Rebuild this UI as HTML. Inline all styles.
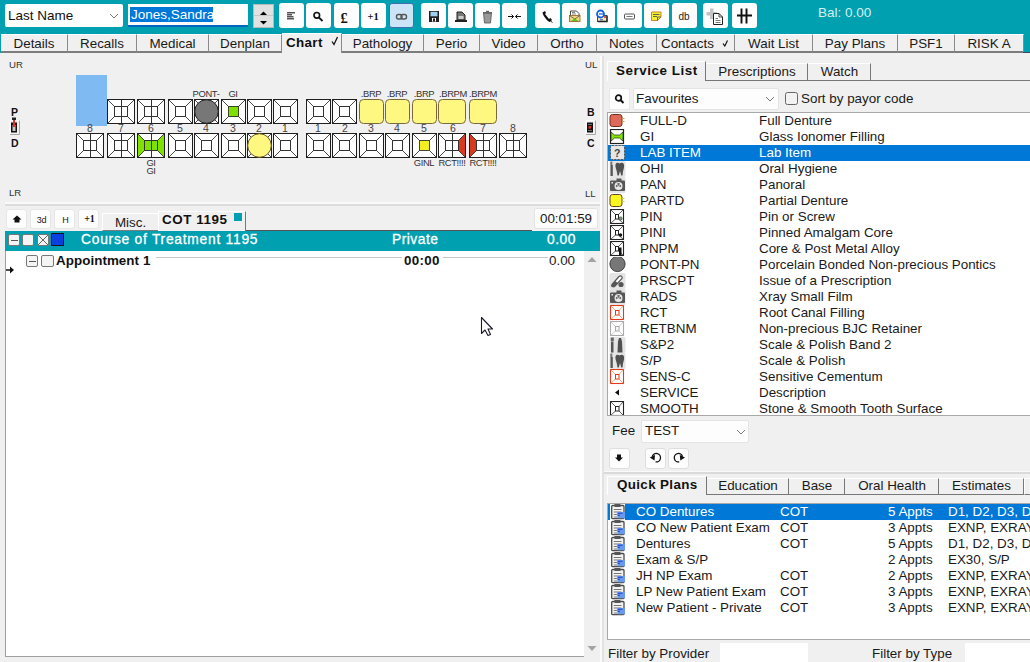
<!DOCTYPE html>
<html><head><meta charset="utf-8">
<style>
*{box-sizing:border-box;margin:0;padding:0}
html,body{width:1030px;height:662px;overflow:hidden;background:#f0f0f0;font-family:"Liberation Sans",sans-serif;font-size:13px;color:#000}
body{position:relative}
.a{position:absolute;white-space:nowrap}
.hdr{left:0;top:0;width:1030px;height:34px;background:#00a0b0}
.tb{position:absolute;top:3px;width:25px;height:25px;background:#fdfdfd;border-radius:3px}
.tb svg{position:absolute;left:0;top:0}
.tab{position:absolute;top:34px;height:19px;background:#f0f0f0;border-top:1px solid #fff;border-bottom:2px solid #7c7c7c;border-right:1px solid #8a8a8a;text-align:center;line-height:17px;font-size:13.4px;color:#1a1a1a;white-space:nowrap}
.lbl10{font-size:9.6px;color:#333;line-height:12px}
.lblb{font-size:10.5px;font-weight:bold;color:#111;line-height:11px}
.num{width:20px;text-align:center;font-size:10.5px;color:#444;line-height:11px}
.tl{width:60px;text-align:center;font-size:9.4px;color:#333;line-height:9px;letter-spacing:-0.35px}
.sb{position:absolute;top:209px;width:21px;height:20px;background:#fdfdfd;border-radius:3px;border:1px solid #e6e6e6}
.sb svg{position:absolute;left:-1px;top:-1px}
.cb{position:absolute;background:#f4f4f4;border:1px solid #777;border-radius:2px}
.li{font-size:13.4px;line-height:16px}
.rb{position:absolute;top:448px;width:21px;height:21px;background:#fdfdfd;border-radius:3px;border:1px solid #dedede}
.rb svg{position:absolute;left:-1px;top:-1px}
</style></head><body>
<div class="a hdr"></div>
<!-- Last Name combo -->
<div class="a" style="left:5px;top:4px;width:118px;height:23px;background:#fff;border-radius:2px"></div>
<div class="a" style="left:8px;top:8px;font-size:13.5px;color:#111;line-height:15px">Last Name</div>
<svg class="a" style="left:109px;top:13px" width="10" height="6"><path d="M1 1 L5 5 L9 1" fill="none" stroke="#777" stroke-width="1"/></svg>
<!-- text field -->
<div class="a" style="left:128px;top:4px;width:120px;height:23px;background:#fff;border-bottom:2px solid #0067c0"></div>
<div class="a" style="left:130px;top:7px;width:83px;height:15px;background:#0078d7"></div>
<div class="a" style="left:131px;top:7px;font-size:13.5px;color:#fff;line-height:15px">Jones,Sandra</div>
<!-- spinner -->
<div class="a" style="left:253px;top:4px;width:21px;height:24px;background:#e1e1e1;border:1px solid #b8b8b8"></div>
<div class="a" style="left:254px;top:15px;width:19px;height:1px;background:#c8c8c8"></div>
<svg class="a" style="left:253px;top:4px" width="21" height="24"><path d="M7 11 L10.5 7.5 L14 11 Z" fill="#000"/><path d="M7 17 L10.5 20.5 L14 17 Z" fill="#000"/></svg>
<!-- toolbar buttons -->
<div class="tb" style="left:279px"><svg width="25" height="25"><g fill="#555"><rect x="8" y="9" width="8" height="1.5"/><rect x="8" y="11" width="5" height="1.5"/><rect x="8" y="13" width="6.5" height="1.5"/><rect x="8" y="15" width="7" height="1.5"/></g></svg></div>
<div class="tb" style="left:306px"><svg width="25" height="25"><circle cx="10.8" cy="12.3" r="2.8" fill="none" stroke="#111" stroke-width="1.6"/><path d="M12.8 14.3 L16.5 18" stroke="#111" stroke-width="1.8"/></svg></div>
<div class="tb" style="left:334px"><svg width="25" height="25"><text x="6.5" y="19.5" font-family="Liberation Serif" font-weight="bold" font-size="14.5" fill="#111">£</text></svg></div>
<div class="tb" style="left:361px"><svg width="25" height="25"><text x="6.5" y="17" font-family="Liberation Serif" font-weight="bold" font-size="10.5" fill="#111">+1</text></svg></div>
<div class="tb" style="left:389px;background:#cce4f7;border:1px solid #3f6fb0"><svg width="25" height="25" style="left:-1px;top:-1px"><g fill="none" stroke="#555" stroke-width="1.4"><rect x="7.5" y="11.5" width="5.5" height="4.5" rx="2"/><rect x="12" y="11.5" width="5.5" height="4.5" rx="2"/></g></svg></div>
<div class="tb" style="left:421px"><svg width="25" height="25"><rect x="8" y="8" width="10" height="11" fill="#222"/><rect x="9.5" y="8.8" width="7" height="4.5" fill="#9fd0f0"/><rect x="11" y="15" width="4" height="3.5" fill="#fff"/><rect x="12" y="15.5" width="2" height="3" fill="#222"/></svg></div>
<div class="tb" style="left:448px"><svg width="25" height="25"><path d="M9 9 H14 L17 12 V17 H9 Z" fill="#777" stroke="#222" stroke-width="1"/><rect x="10.5" y="13" width="5" height="3" fill="#ccc"/><rect x="7" y="17" width="12" height="2" fill="#222"/></svg></div>
<div class="tb" style="left:475px"><svg width="25" height="25"><path d="M8.5 10 H16.5 L15.5 20 H9.5 Z" fill="#999" stroke="#555" stroke-width="0.8"/><rect x="8" y="9" width="9" height="1.6" fill="#666"/><rect x="11" y="7.8" width="3" height="1.4" fill="#666"/></svg></div>
<div class="tb" style="left:502px"><svg width="25" height="25"><g stroke="#111" stroke-width="1" fill="none"><path d="M6 13.5 H11.5 M9.5 11.5 L11.5 13.5 L9.5 15.5"/><path d="M19 13.5 H13.5 M15.5 11.5 L13.5 13.5 L15.5 15.5"/></g></svg></div>
<div class="tb" style="left:535px"><svg width="25" height="25"><path d="M7.5 9.5 L10 8 L11 10 L10 11 L14 16 L15.5 15 L17 17 L15 19 C13 19 8 13 7.5 9.5 Z" fill="#111"/><path d="M16 18 L17.5 20" stroke="#555" stroke-width="1"/></svg></div>
<div class="tb" style="left:562px"><svg width="25" height="25"><path d="M8.5 8 H14.5 L17 10.5 V14 H8.5 Z" fill="#fff" stroke="#333" stroke-width="0.9"/><path d="M10 9.5 H13 M10 11 H14" stroke="#666" stroke-width="0.8"/><rect x="7.5" y="12.5" width="10.5" height="6" fill="#f0d878" stroke="#9a7030" stroke-width="0.9"/><path d="M7.5 12.5 L12.75 16 L18 12.5" fill="none" stroke="#555" stroke-width="0.8"/><path d="M9 18 L12.75 15.5 L16.5 18 Z" fill="#58c020"/></svg></div>
<div class="tb" style="left:590px"><svg width="25" height="25"><rect x="7.5" y="12.5" width="9.5" height="6" fill="#f4e8b8" stroke="#333" stroke-width="0.9"/><path d="M17 13 V18.5 H8" fill="none" stroke="#222" stroke-width="1.3"/><circle cx="15" cy="14" r="1" fill="#e02020"/><rect x="10" y="16" width="3" height="1.5" fill="#6080c0"/><circle cx="10.5" cy="11" r="3.5" fill="#fff" stroke="#1060e0" stroke-width="1.8"/><path d="M9 11 H13" stroke="#1060e0" stroke-width="1.2"/></svg></div>
<div class="tb" style="left:617px"><svg width="25" height="25"><rect x="7.5" y="11" width="10" height="5" rx="1" fill="#fff" stroke="#555" stroke-width="1"/><path d="M9.5 13.5 H15.5" stroke="#777" stroke-width="1"/></svg></div>
<div class="tb" style="left:644px"><svg width="25" height="25"><path d="M7.5 9 H17 V14 L13.5 17.5 H7.5 Z" fill="#f4f030" stroke="#c77a20" stroke-width="0.9"/><path d="M9 11.5 H15.5 M9 13.5 H13 M13.5 17.5 V14 H17" fill="none" stroke="#445" stroke-width="0.8"/></svg></div>
<div class="tb" style="left:672px"><svg width="25" height="25"><text x="6.5" y="17" font-family="Liberation Sans" font-size="10" fill="#222">db</text></svg></div>
<div class="tb" style="left:703px"><svg width="25" height="25"><path d="M3.5 9 H7 V5.5 H10.5 V9 H14 V12.5 H10.5 V16 H7 V12.5 H3.5 Z" fill="#c4c4c4"/><path d="M10.5 10.5 H16 L19.5 14 V21.5 H10.5 Z" fill="#fff" stroke="#222" stroke-width="1"/><path d="M16 10.5 V14 H19.5" fill="none" stroke="#222" stroke-width="0.8"/><path d="M12.5 15.5 H15 M12.5 17.5 H17.5 M12.5 19.5 H17.5" stroke="#666" stroke-width="0.9"/></svg></div>
<div class="tb" style="left:732px"><svg width="25" height="25"><path d="M9.5 5.5 V20.5 M14.5 5.5 V20.5 M5 12.5 H20" stroke="#111" stroke-width="1.9"/></svg></div>
<div class="a" style="left:818px;top:5px;font-size:13.5px;color:#d6eef2;line-height:15px">Bal: 0.00</div>
<!-- tabs -->
<div class="a" style="left:0;top:34px;width:1px;height:19px;background:#00a0b0"></div>
<div class="tab" style="left:1px;width:67px">Details</div>
<div class="tab" style="left:68px;width:69px">Recalls</div>
<div class="tab" style="left:137px;width:72px">Medical</div>
<div class="tab" style="left:209px;width:73px">Denplan</div>
<div class="tab" style="left:282px;top:33px;width:60px;height:20px;border-bottom:none;background:#f0f0f0"></div>
<div class="a" style="left:286px;top:36px;font-size:13.4px;font-weight:bold;letter-spacing:0.35px;line-height:14px;color:#111">Chart</div>
<svg class="a" style="left:330px;top:36px" width="9" height="10"><path d="M2 5.5 L4 8.5 L7.5 1" fill="none" stroke="#111" stroke-width="1.3"/></svg>
<div class="tab" style="left:342px;width:82px">Pathology</div>
<div class="tab" style="left:424px;width:56px">Perio</div>
<div class="tab" style="left:480px;width:58px">Video</div>
<div class="tab" style="left:538px;width:59px">Ortho</div>
<div class="tab" style="left:597px;width:60px">Notes</div>
<div class="tab" style="left:657px;width:78px;text-align:left;padding-left:4px">Contacts</div>
<svg class="a" style="left:722px;top:40px" width="7" height="7"><path d="M1 3.5 L2.8 6 L5.5 0.5" fill="none" stroke="#111" stroke-width="1.2"/></svg>
<div class="tab" style="left:735px;width:78px">Wait List</div>
<div class="tab" style="left:813px;width:85px">Pay Plans</div>
<div class="tab" style="left:898px;width:57px">PSF1</div>
<div class="tab" style="left:955px;width:69px">RISK A</div>
<div class="a" style="left:1024px;top:34px;width:6px;height:18px;background:#00a0b0"></div>
<div class="a" style="left:1023px;top:52px;width:7px;height:1px;background:#3a4a60"></div>
<div class="a lbl10" style="left:9px;top:59px">UR</div>
<div class="a lbl10" style="left:585px;top:59px">UL</div>
<div class="a lbl10" style="left:9px;top:187px">LR</div>
<div class="a lbl10" style="left:585px;top:188px">LL</div>
<div class="a lblb" style="left:11px;top:107px">P</div>
<div class="a lblb" style="left:11px;top:138px">D</div>
<svg class="a" style="left:9px;top:116px" width="12" height="20"><path d="M1 19 V4.5 H10.5" fill="none" stroke="#fff" stroke-width="1"/><path d="M10.5 4.5 V18.5 H1" fill="none" stroke="#a8a8a8" stroke-width="1"/><rect x="2" y="6.5" width="6" height="10" fill="#111"/><rect x="3.5" y="9" width="3" height="6" fill="#c8c8c8"/><rect x="4" y="2" width="2" height="9" fill="#e03020"/><rect x="3" y="1.5" width="4" height="2.5" fill="#222"/></svg>
<div class="a lblb" style="left:587px;top:107px">B</div>
<div class="a lblb" style="left:587px;top:138px">C</div>
<svg class="a" style="left:585px;top:116px" width="12" height="20"><path d="M1 19 V4.5 H10.5" fill="none" stroke="#fff" stroke-width="1"/><path d="M10.5 4.5 V18.5 H1" fill="none" stroke="#a8a8a8" stroke-width="1"/><rect x="2" y="6.5" width="6" height="10" fill="#111"/><path d="M3 8.5 H7 M3 14.5 H7" stroke="#888" stroke-width="0.8"/><path d="M3.5 10 L6.5 10 L5.5 13 L3.5 12.5 Z" fill="#e82a1a"/></svg>
<div class="a" style="left:76px;top:75px;width:31px;height:51px;background:#7fbaf3"></div>
<svg class="a" style="left:107px;top:99px" width="28" height="25"><rect x="0" y="0" width="28" height="25" fill="#fff"/><g stroke="#333" stroke-width="1" fill="none"><path d="M0 0 L7.5 7.5 M28 0 L20.5 7.5 M0 25 L7.5 17.5 M28 25 L20.5 17.5" stroke-width="0.9"/><rect x="7.5" y="7.5" width="13" height="10"/><path d="M14.5 0.5 V24.5"/></g><rect x="0.5" y="0.5" width="27" height="24" fill="none" stroke="#1e1e1e" stroke-width="1"/></svg>
<svg class="a" style="left:137px;top:99px" width="28" height="25"><rect x="0" y="0" width="28" height="25" fill="#fff"/><g stroke="#333" stroke-width="1" fill="none"><path d="M0 0 L7.5 7.5 M28 0 L20.5 7.5 M0 25 L7.5 17.5 M28 25 L20.5 17.5" stroke-width="0.9"/><rect x="7.5" y="7.5" width="13" height="10"/><path d="M14.5 0.5 V24.5"/></g><rect x="0.5" y="0.5" width="27" height="24" fill="none" stroke="#1e1e1e" stroke-width="1"/></svg>
<svg class="a" style="left:168px;top:99px" width="25" height="25"><rect x="0" y="0" width="25" height="25" fill="#fff"/><g stroke="#333" stroke-width="1" fill="none"><path d="M0 0 L7.5 7.5 M25 0 L17.5 7.5 M0 25 L7.5 17.5 M25 25 L17.5 17.5" stroke-width="0.9"/><rect x="7.5" y="7.5" width="10" height="10"/></g><rect x="0.5" y="0.5" width="24" height="24" fill="none" stroke="#1e1e1e" stroke-width="1"/></svg>
<svg class="a" style="left:194px;top:99px" width="25" height="25"><rect x="0" y="0" width="25" height="25" fill="#fff"/><g stroke="#333" stroke-width="1" fill="none"><path d="M0 0 L7.5 7.5 M25 0 L17.5 7.5 M0 25 L7.5 17.5 M25 25 L17.5 17.5" stroke-width="0.9"/><rect x="7.5" y="7.5" width="10" height="10"/></g><rect x="0.5" y="0.5" width="24" height="24" fill="none" stroke="#1e1e1e" stroke-width="1"/></svg>
<svg class="a" style="left:194px;top:99px" width="25" height="25"><circle cx="12.5" cy="12.5" r="11.8" fill="#777" stroke="#222" stroke-width="1"/></svg>
<svg class="a" style="left:221px;top:99px" width="25" height="25"><rect x="0" y="0" width="25" height="25" fill="#fff"/><g stroke="#333" stroke-width="1" fill="none"><path d="M0 0 L7.5 7.5 M25 0 L17.5 7.5 M0 25 L7.5 17.5 M25 25 L17.5 17.5" stroke-width="0.9"/><rect x="7.5" y="7.5" width="10" height="10"/></g><rect x="0.5" y="0.5" width="24" height="24" fill="none" stroke="#1e1e1e" stroke-width="1"/></svg>
<svg class="a" style="left:221px;top:99px" width="25" height="25"><rect x="7.5" y="7.5" width="10" height="10" fill="#7fe000" stroke="#333" stroke-width="0.8"/></svg>
<svg class="a" style="left:247px;top:99px" width="25" height="25"><rect x="0" y="0" width="25" height="25" fill="#fff"/><g stroke="#333" stroke-width="1" fill="none"><path d="M0 0 L7.5 7.5 M25 0 L17.5 7.5 M0 25 L7.5 17.5 M25 25 L17.5 17.5" stroke-width="0.9"/><rect x="7.5" y="7.5" width="10" height="10"/></g><rect x="0.5" y="0.5" width="24" height="24" fill="none" stroke="#1e1e1e" stroke-width="1"/></svg>
<svg class="a" style="left:273px;top:99px" width="25" height="25"><rect x="0" y="0" width="25" height="25" fill="#fff"/><g stroke="#333" stroke-width="1" fill="none"><path d="M0 0 L7.5 7.5 M25 0 L17.5 7.5 M0 25 L7.5 17.5 M25 25 L17.5 17.5" stroke-width="0.9"/><rect x="7.5" y="7.5" width="10" height="10"/></g><rect x="0.5" y="0.5" width="24" height="24" fill="none" stroke="#1e1e1e" stroke-width="1"/></svg>
<svg class="a" style="left:76px;top:133px" width="28" height="25"><rect x="0" y="0" width="28" height="25" fill="#fff"/><g stroke="#333" stroke-width="1" fill="none"><path d="M0 0 L7.5 7.5 M28 0 L20.5 7.5 M0 25 L7.5 17.5 M28 25 L20.5 17.5" stroke-width="0.9"/><rect x="7.5" y="7.5" width="13" height="10"/><path d="M14.5 0.5 V24.5"/></g><rect x="0.5" y="0.5" width="27" height="24" fill="none" stroke="#1e1e1e" stroke-width="1"/></svg>
<svg class="a" style="left:107px;top:133px" width="28" height="25"><rect x="0" y="0" width="28" height="25" fill="#fff"/><g stroke="#333" stroke-width="1" fill="none"><path d="M0 0 L7.5 7.5 M28 0 L20.5 7.5 M0 25 L7.5 17.5 M28 25 L20.5 17.5" stroke-width="0.9"/><rect x="7.5" y="7.5" width="13" height="10"/><path d="M14.5 0.5 V24.5"/></g><rect x="0.5" y="0.5" width="27" height="24" fill="none" stroke="#1e1e1e" stroke-width="1"/></svg>
<svg class="a" style="left:137px;top:133px" width="28" height="25"><rect x="0" y="0" width="28" height="25" fill="#fff"/><path d="M0.5 0.5 L7.5 7.5 V17.5 L0.5 24.5 Z M27.5 0.5 L20.5 7.5 V17.5 L27.5 24.5 Z" fill="#80e000"/><rect x="7.5" y="7.5" width="13" height="10" fill="#80e000"/><g stroke="#333" stroke-width="1" fill="none"><path d="M0 0 L7.5 7.5 M28 0 L20.5 7.5 M0 25 L7.5 17.5 M28 25 L20.5 17.5" stroke-width="0.9"/><rect x="7.5" y="7.5" width="13" height="10"/><path d="M14.5 0.5 V24.5"/></g><rect x="0.5" y="0.5" width="27" height="24" fill="none" stroke="#1e1e1e" stroke-width="1"/></svg>
<svg class="a" style="left:168px;top:133px" width="25" height="25"><rect x="0" y="0" width="25" height="25" fill="#fff"/><g stroke="#333" stroke-width="1" fill="none"><path d="M0 0 L7.5 7.5 M25 0 L17.5 7.5 M0 25 L7.5 17.5 M25 25 L17.5 17.5" stroke-width="0.9"/><rect x="7.5" y="7.5" width="10" height="10"/></g><rect x="0.5" y="0.5" width="24" height="24" fill="none" stroke="#1e1e1e" stroke-width="1"/></svg>
<svg class="a" style="left:194px;top:133px" width="25" height="25"><rect x="0" y="0" width="25" height="25" fill="#fff"/><g stroke="#333" stroke-width="1" fill="none"><path d="M0 0 L7.5 7.5 M25 0 L17.5 7.5 M0 25 L7.5 17.5 M25 25 L17.5 17.5" stroke-width="0.9"/><rect x="7.5" y="7.5" width="10" height="10"/></g><rect x="0.5" y="0.5" width="24" height="24" fill="none" stroke="#1e1e1e" stroke-width="1"/></svg>
<svg class="a" style="left:221px;top:133px" width="25" height="25"><rect x="0" y="0" width="25" height="25" fill="#fff"/><g stroke="#333" stroke-width="1" fill="none"><path d="M0 0 L7.5 7.5 M25 0 L17.5 7.5 M0 25 L7.5 17.5 M25 25 L17.5 17.5" stroke-width="0.9"/><rect x="7.5" y="7.5" width="10" height="10"/></g><rect x="0.5" y="0.5" width="24" height="24" fill="none" stroke="#1e1e1e" stroke-width="1"/></svg>
<svg class="a" style="left:247px;top:133px" width="25" height="25"><rect x="0" y="0" width="25" height="25" fill="#fff"/><g stroke="#333" stroke-width="1" fill="none"><path d="M0 0 L7.5 7.5 M25 0 L17.5 7.5 M0 25 L7.5 17.5 M25 25 L17.5 17.5" stroke-width="0.9"/><rect x="7.5" y="7.5" width="10" height="10"/></g><rect x="0.5" y="0.5" width="24" height="24" fill="none" stroke="#1e1e1e" stroke-width="1"/></svg>
<svg class="a" style="left:247px;top:133px" width="25" height="25"><circle cx="12.5" cy="12.5" r="11.8" fill="#fff880" stroke="#6a5a20" stroke-width="1"/></svg>
<svg class="a" style="left:273px;top:133px" width="25" height="25"><rect x="0" y="0" width="25" height="25" fill="#fff"/><g stroke="#333" stroke-width="1" fill="none"><path d="M0 0 L7.5 7.5 M25 0 L17.5 7.5 M0 25 L7.5 17.5 M25 25 L17.5 17.5" stroke-width="0.9"/><rect x="7.5" y="7.5" width="10" height="10"/></g><rect x="0.5" y="0.5" width="24" height="24" fill="none" stroke="#1e1e1e" stroke-width="1"/></svg>
<svg class="a" style="left:306px;top:99px" width="25" height="25"><rect x="0" y="0" width="25" height="25" fill="#fff"/><g stroke="#333" stroke-width="1" fill="none"><path d="M0 0 L7.5 7.5 M25 0 L17.5 7.5 M0 25 L7.5 17.5 M25 25 L17.5 17.5" stroke-width="0.9"/><rect x="7.5" y="7.5" width="10" height="10"/></g><rect x="0.5" y="0.5" width="24" height="24" fill="none" stroke="#1e1e1e" stroke-width="1"/></svg>
<svg class="a" style="left:332px;top:99px" width="25" height="25"><rect x="0" y="0" width="25" height="25" fill="#fff"/><g stroke="#333" stroke-width="1" fill="none"><path d="M0 0 L7.5 7.5 M25 0 L17.5 7.5 M0 25 L7.5 17.5 M25 25 L17.5 17.5" stroke-width="0.9"/><rect x="7.5" y="7.5" width="10" height="10"/></g><rect x="0.5" y="0.5" width="24" height="24" fill="none" stroke="#1e1e1e" stroke-width="1"/></svg>
<svg class="a" style="left:359px;top:99px" width="25" height="25"><rect x="0.5" y="0.5" width="24" height="24" rx="4" fill="#fff880" stroke="#7a6a3a" stroke-width="1"/></svg>
<svg class="a" style="left:385px;top:99px" width="25" height="25"><rect x="0.5" y="0.5" width="24" height="24" rx="4" fill="#fff880" stroke="#7a6a3a" stroke-width="1"/></svg>
<svg class="a" style="left:412px;top:99px" width="25" height="25"><rect x="0.5" y="0.5" width="24" height="24" rx="4" fill="#fff880" stroke="#7a6a3a" stroke-width="1"/></svg>
<svg class="a" style="left:438px;top:99px" width="28" height="25"><rect x="0.5" y="0.5" width="27" height="24" rx="4" fill="#fff880" stroke="#7a6a3a" stroke-width="1"/></svg>
<svg class="a" style="left:469px;top:99px" width="28" height="25"><rect x="0.5" y="0.5" width="27" height="24" rx="4" fill="#fff880" stroke="#7a6a3a" stroke-width="1"/></svg>
<svg class="a" style="left:306px;top:133px" width="25" height="25"><rect x="0" y="0" width="25" height="25" fill="#fff"/><g stroke="#333" stroke-width="1" fill="none"><path d="M0 0 L7.5 7.5 M25 0 L17.5 7.5 M0 25 L7.5 17.5 M25 25 L17.5 17.5" stroke-width="0.9"/><rect x="7.5" y="7.5" width="10" height="10"/></g><rect x="0.5" y="0.5" width="24" height="24" fill="none" stroke="#1e1e1e" stroke-width="1"/></svg>
<svg class="a" style="left:332px;top:133px" width="25" height="25"><rect x="0" y="0" width="25" height="25" fill="#fff"/><g stroke="#333" stroke-width="1" fill="none"><path d="M0 0 L7.5 7.5 M25 0 L17.5 7.5 M0 25 L7.5 17.5 M25 25 L17.5 17.5" stroke-width="0.9"/><rect x="7.5" y="7.5" width="10" height="10"/></g><rect x="0.5" y="0.5" width="24" height="24" fill="none" stroke="#1e1e1e" stroke-width="1"/></svg>
<svg class="a" style="left:359px;top:133px" width="25" height="25"><rect x="0" y="0" width="25" height="25" fill="#fff"/><g stroke="#333" stroke-width="1" fill="none"><path d="M0 0 L7.5 7.5 M25 0 L17.5 7.5 M0 25 L7.5 17.5 M25 25 L17.5 17.5" stroke-width="0.9"/><rect x="7.5" y="7.5" width="10" height="10"/></g><rect x="0.5" y="0.5" width="24" height="24" fill="none" stroke="#1e1e1e" stroke-width="1"/></svg>
<svg class="a" style="left:385px;top:133px" width="25" height="25"><rect x="0" y="0" width="25" height="25" fill="#fff"/><g stroke="#333" stroke-width="1" fill="none"><path d="M0 0 L7.5 7.5 M25 0 L17.5 7.5 M0 25 L7.5 17.5 M25 25 L17.5 17.5" stroke-width="0.9"/><rect x="7.5" y="7.5" width="10" height="10"/></g><rect x="0.5" y="0.5" width="24" height="24" fill="none" stroke="#1e1e1e" stroke-width="1"/></svg>
<svg class="a" style="left:412px;top:133px" width="25" height="25"><rect x="0" y="0" width="25" height="25" fill="#fff"/><g stroke="#333" stroke-width="1" fill="none"><path d="M0 0 L7.5 7.5 M25 0 L17.5 7.5 M0 25 L7.5 17.5 M25 25 L17.5 17.5" stroke-width="0.9"/><rect x="7.5" y="7.5" width="10" height="10"/></g><rect x="0.5" y="0.5" width="24" height="24" fill="none" stroke="#1e1e1e" stroke-width="1"/></svg>
<svg class="a" style="left:412px;top:133px" width="25" height="25"><rect x="7.5" y="7.5" width="10" height="10" fill="#f4f020" stroke="#333" stroke-width="0.8"/></svg>
<svg class="a" style="left:438px;top:133px" width="28" height="25"><rect x="0" y="0" width="28" height="25" fill="#fff"/><path d="M27.5 0.5 L20.5 7.5 V17.5 L27.5 24.5 Z" fill="#d83a20"/><g stroke="#333" stroke-width="1" fill="none"><path d="M0 0 L7.5 7.5 M28 0 L20.5 7.5 M0 25 L7.5 17.5 M28 25 L20.5 17.5" stroke-width="0.9"/><rect x="7.5" y="7.5" width="13" height="10"/><path d="M14.5 0.5 V24.5"/></g><rect x="0.5" y="0.5" width="27" height="24" fill="none" stroke="#1e1e1e" stroke-width="1"/></svg>
<svg class="a" style="left:469px;top:133px" width="28" height="25"><rect x="0" y="0" width="28" height="25" fill="#fff"/><path d="M0.5 0.5 L7.5 7.5 V17.5 L0.5 24.5 Z" fill="#d83a20"/><g stroke="#333" stroke-width="1" fill="none"><path d="M0 0 L7.5 7.5 M28 0 L20.5 7.5 M0 25 L7.5 17.5 M28 25 L20.5 17.5" stroke-width="0.9"/><rect x="7.5" y="7.5" width="13" height="10"/><path d="M14.5 0.5 V24.5"/></g><rect x="0.5" y="0.5" width="27" height="24" fill="none" stroke="#1e1e1e" stroke-width="1"/></svg>
<svg class="a" style="left:499px;top:133px" width="28" height="25"><rect x="0" y="0" width="28" height="25" fill="#fff"/><g stroke="#333" stroke-width="1" fill="none"><path d="M0 0 L7.5 7.5 M28 0 L20.5 7.5 M0 25 L7.5 17.5 M28 25 L20.5 17.5" stroke-width="0.9"/><rect x="7.5" y="7.5" width="13" height="10"/><path d="M14.5 0.5 V24.5"/></g><rect x="0.5" y="0.5" width="27" height="24" fill="none" stroke="#1e1e1e" stroke-width="1"/></svg>
<div class="a num" style="left:80px;top:123px">8</div>
<div class="a num" style="left:111px;top:123px">7</div>
<div class="a num" style="left:141px;top:123px">6</div>
<div class="a num" style="left:170px;top:123px">5</div>
<div class="a num" style="left:196px;top:123px">4</div>
<div class="a num" style="left:223px;top:123px">3</div>
<div class="a num" style="left:249px;top:123px">2</div>
<div class="a num" style="left:275px;top:123px">1</div>
<div class="a num" style="left:308px;top:123px">1</div>
<div class="a num" style="left:335px;top:123px">2</div>
<div class="a num" style="left:361px;top:123px">3</div>
<div class="a num" style="left:387px;top:123px">4</div>
<div class="a num" style="left:414px;top:123px">5</div>
<div class="a num" style="left:443px;top:123px">6</div>
<div class="a num" style="left:473px;top:123px">7</div>
<div class="a num" style="left:503px;top:123px">8</div>
<div class="a tl" style="left:176px;top:89px">PONT-</div>
<div class="a tl" style="left:203px;top:89px">GI</div>
<div class="a tl" style="left:341px;top:89px">.BRP</div>
<div class="a tl" style="left:367px;top:89px">.BRP</div>
<div class="a tl" style="left:394px;top:89px">.BRP</div>
<div class="a tl" style="left:423px;top:89px">.BRPM</div>
<div class="a tl" style="left:453px;top:89px">.BRPM</div>
<div class="a tl" style="left:121px;top:158px">GI</div>
<div class="a tl" style="left:121px;top:166px">GI</div>
<div class="a tl" style="left:394px;top:158px">GINL</div>
<div class="a tl" style="left:422px;top:158px">RCT!!!!</div>
<div class="a tl" style="left:453px;top:158px">RCT!!!!</div>
<div class="a" style="left:5px;top:202px;width:595px;height:2px;background:#fafafa"></div>
<div class="a" style="left:5px;top:204px;width:595px;height:2px;background:#dcdcdc"></div><!-- chart toolbar -->
<div class="sb" style="left:6px"><svg width="21" height="20"><path d="M11 6.5 L15.5 10.5 H13.5 V13.5 H8.5 V10.5 H6.5 Z" fill="#111"/></svg></div>
<div class="sb" style="left:30px"><div class="a" style="left:0;top:5px;width:21px;text-align:center;font-size:9px;color:#222;line-height:11px;letter-spacing:-0.2px">3d</div></div>
<div class="sb" style="left:54px"><div class="a" style="left:0;top:5px;width:21px;text-align:center;font-size:9px;color:#222;line-height:11px">H</div></div>
<div class="sb" style="left:78px"><div class="a" style="left:0;top:3px;width:21px;text-align:center;font-family:'Liberation Serif';font-weight:bold;font-size:10px;color:#111;line-height:12px">+1</div></div>
<!-- tabs Misc / COT -->
<div class="a" style="left:102px;top:213px;width:57px;height:18px;background:#f0f0f0;border-top:1px solid #fff;border-left:1px solid #fff;border-bottom:1px solid #7c7c7c"></div>
<div class="a" style="left:102px;top:216px;width:57px;text-align:center;font-size:13.4px;color:#1a1a1a;line-height:14px">Misc.</div>
<div class="a" style="left:158px;top:211px;width:88px;height:20px;background:#f0f0f0;border-top:1px solid #fff;border-left:1px solid #fff;border-right:1px solid #777"></div>
<div class="a" style="left:162px;top:213px;font-size:13.4px;font-weight:bold;color:#111;line-height:14px;letter-spacing:0.55px">COT 1195</div>
<div class="a" style="left:234px;top:213px;width:8px;height:8px;background:#00a0b0"></div>
<div class="a" style="left:246px;top:230px;width:286px;height:1px;background:#555"></div>
<!-- timer -->
<div class="a" style="left:534px;top:208px;width:64px;height:21px;background:#fcfcfc;border-radius:2px;border:1px solid #e4e4e4"></div>
<div class="a" style="left:534px;top:211px;width:64px;text-align:center;font-size:13.4px;color:#1a1a1a;line-height:15px">00:01:59</div>
<!-- tree panel -->
<div class="a" style="left:5px;top:231px;width:595px;height:426px;background:#fff;border-left:1px solid #a0a0a0;border-bottom:1px solid #a0a0a0"></div>
<div class="a" style="left:5px;top:231px;width:595px;height:20px;background:#00a0b0"></div>
<div class="cb" style="left:8px;top:234px;width:12px;height:12px"><div class="a" style="left:2px;top:5px;width:7px;height:1px;background:#555"></div></div>
<div class="cb" style="left:22px;top:234px;width:12px;height:12px"></div>
<div class="cb" style="left:37px;top:234px;width:12px;height:12px"><svg class="a" style="left:-1px;top:-1px" width="12" height="12"><path d="M1 1 L11 11 M11 1 L1 11" stroke="#555" stroke-width="0.9"/></svg></div>
<div class="a" style="left:51px;top:233px;width:13px;height:13px;background:#0a3fe0;border:1px solid #112"></div>
<div class="a" style="left:81px;top:232px;font-size:13.4px;color:#fff;line-height:16px;letter-spacing:0.75px;font-size:13.8px;-webkit-text-stroke:0.3px #fff">Course of Treatment 1195</div>
<div class="a" style="left:392px;top:232px;font-size:13.4px;color:#fff;line-height:16px;letter-spacing:0.5px;font-size:13.8px;-webkit-text-stroke:0.3px #fff">Private</div>
<div class="a" style="left:547px;top:232px;font-size:13.4px;color:#fff;line-height:16px;letter-spacing:0.5px;font-size:13.8px;-webkit-text-stroke:0.3px #fff">0.00</div>
<!-- appointment row -->
<div class="cb" style="left:26px;top:255px;width:12px;height:12px"><div class="a" style="left:2px;top:5px;width:7px;height:1px;background:#555"></div></div>
<div class="cb" style="left:41px;top:255px;width:13px;height:12px"></div>
<div class="a" style="left:56px;top:253px;font-size:13.4px;font-weight:bold;color:#111;line-height:16px;letter-spacing:0.05px">Appointment 1</div>
<div class="a" style="left:156px;top:257px;width:246px;height:1px;background:#c8c8c8"></div>
<div class="a" style="left:404px;top:253px;font-size:13.4px;font-weight:bold;color:#111;line-height:16px;letter-spacing:0.3px">00:00</div>
<div class="a" style="left:443px;top:257px;width:105px;height:1px;background:#c8c8c8"></div>
<div class="a" style="left:549px;top:253px;font-size:13.4px;color:#222;line-height:16px">0.00</div>
<svg class="a" style="left:6px;top:266px" width="9" height="8"><path d="M0 3.2 H4 V0.5 L8 4 L4 7.5 V4.8 H0 Z" fill="#111"/></svg>
<!-- scrollbar -->
<div class="a" style="left:584px;top:251px;width:16px;height:406px;background:#f0f0f0"></div>
<svg class="a" style="left:584px;top:253px" width="16" height="12"><path d="M3.5 9 L8 4 L12.5 9 Z" fill="#a3a3a3"/></svg>
<svg class="a" style="left:584px;top:643px" width="16" height="12"><path d="M3.5 3 L8 8 L12.5 3 Z" fill="#a3a3a3"/></svg>
<!-- mouse cursor -->
<svg class="a" style="left:480px;top:316px" width="15" height="22"><path d="M1.5 1.5 V17.5 L5 14 L8 19.5 L10.5 18.5 L8 13 L12.5 13 Z" fill="#fff" stroke="#1a1a2a" stroke-width="1.1" stroke-linejoin="round"/></svg>
<div class="a" style="left:600px;top:56px;width:2px;height:606px;background:#fbfbfb"></div>
<div class="a" style="left:602px;top:56px;width:2px;height:606px;background:#e2e2e2"></div>
<div class="a" style="left:608px;top:80px;width:422px;height:1px;background:#7a7a7a"></div>
<div class="a" style="left:607px;top:61px;width:99px;height:20px;background:#f0f0f0;border-top:1px solid #fff;border-left:1px solid #fff;border-right:1px solid #777"></div>
<div class="a" style="left:616px;top:64px;font-size:13.4px;font-weight:bold;color:#111;line-height:14px;letter-spacing:0.55px">Service List</div>
<div class="a" style="left:706px;top:63px;width:102px;height:18px;background:#f0f0f0;border-top:1px solid #fff;border-right:1px solid #777;border-bottom:1px solid #777"></div>
<div class="a" style="left:706px;top:65px;width:102px;text-align:center;font-size:13.4px;color:#1a1a1a;line-height:14px">Prescriptions</div>
<div class="a" style="left:808px;top:63px;width:63px;height:18px;background:#f0f0f0;border-top:1px solid #fff;border-right:1px solid #777;border-bottom:1px solid #777"></div>
<div class="a" style="left:808px;top:65px;width:63px;text-align:center;font-size:13.4px;color:#1a1a1a;line-height:14px">Watch</div>
<div class="a" style="left:609px;top:88px;width:21px;height:22px;background:#fdfdfd;border-radius:2px;border:1px solid #e8e8e8"><svg class="a" style="left:-1px;top:-1px" width="21" height="22"><circle cx="9.5" cy="10" r="2.8" fill="none" stroke="#111" stroke-width="1.7"/><path d="M11.5 12 L14.5 15" stroke="#111" stroke-width="1.9"/></svg></div>
<div class="a" style="left:633px;top:88px;width:146px;height:22px;background:#fdfdfd;border-radius:2px;border:1px solid #e4e4e4"></div>
<div class="a" style="left:636px;top:91px;font-size:13.4px;color:#1a1a1a;line-height:15px">Favourites</div>
<svg class="a" style="left:765px;top:96px" width="10" height="6"><path d="M1 1 L5 5 L9 1" fill="none" stroke="#777" stroke-width="1"/></svg>
<div class="a" style="left:785px;top:92px;width:13px;height:13px;background:#f2f2f2;border:1px solid #666;border-radius:2.5px"></div>
<div class="a" style="left:801px;top:91px;font-size:13.4px;color:#1a1a1a;line-height:15px">Sort by payor code</div>
<div class="a" style="left:607px;top:112px;width:430px;height:304px;background:#fff;border:1px solid #a8a8a8"></div>
<div class="a" style="left:608px;top:113px;width:422px;height:302px;overflow:hidden">
<svg class="a" style="left:0px;top:0px" width="18" height="16"><rect x="2" y="1.5" width="12" height="12" rx="2.5" fill="#e06a58" stroke="#6a3020" stroke-width="1"/><path d="M14 5.5 H16.5 M14 8.5 H16.5" stroke="#e0a040" stroke-width="1.2"/></svg>
<div class="a li" style="left:32px;top:0px;color:#1a1a1a">FULL-D</div>
<div class="a li" style="left:151px;top:0px;color:#1a1a1a">Full Denture</div>
<svg class="a" style="left:0px;top:16px" width="18" height="16"><rect x="2.5" y="0.5" width="13" height="14" fill="#fff" stroke="#222" stroke-width="1.2"/><path d="M3 3 L6.5 6 H11.5 L15 3 V12 L11.5 9 H6.5 L3 12 Z" fill="#80e800" stroke="#222" stroke-width="0.7"/></svg>
<div class="a li" style="left:32px;top:16px;color:#1a1a1a">GI</div>
<div class="a li" style="left:151px;top:16px;color:#1a1a1a">Glass Ionomer Filling</div>
<div class="a" style="left:0;top:32px;width:422px;height:16px;background:#0078d7"></div>
<svg class="a" style="left:0px;top:32px" width="18" height="16"><rect x="2.5" y="0.5" width="14" height="14" rx="1.5" fill="#e6e6e6" stroke="#555" stroke-width="1" stroke-dasharray="2 1.3"/><text x="6" y="11.5" font-family="Liberation Sans" font-weight="bold" font-size="10.5" fill="#444">?</text></svg>
<div class="a li" style="left:32px;top:32px;color:#fff">LAB ITEM</div>
<div class="a li" style="left:151px;top:32px;color:#fff">Lab Item</div>
<svg class="a" style="left:0px;top:48px" width="18" height="16"><rect x="1.5" y="0" width="16" height="16" rx="1.5" fill="#e4e4e4"/><rect x="2.5" y="4" width="2.3" height="11" fill="#555"/><rect x="2.3" y="0.5" width="2" height="3.5" fill="#777"/><path d="M7.5 3.5 C8 1.5 10 1 11.5 2.5 C13 1 15.5 1.5 16 3.5 C16.5 6 15.5 8 15 10.5 L14.5 14.5 H13.2 L12 10 L10.8 14.5 H9.5 L8.8 10.5 C8.3 8 7 6 7.5 3.5 Z" fill="#505050"/></svg>
<div class="a li" style="left:32px;top:48px;color:#1a1a1a">OHI</div>
<div class="a li" style="left:151px;top:48px;color:#1a1a1a">Oral Hygiene</div>
<svg class="a" style="left:0px;top:64px" width="18" height="16"><rect x="1.5" y="0" width="16" height="16" rx="1.5" fill="#e4e4e4"/><rect x="2" y="3.5" width="15" height="10.5" rx="1" fill="#575757"/><rect x="8.5" y="1.5" width="5" height="2.5" fill="#575757"/><circle cx="10.5" cy="9" r="4" fill="#e8e8e8"/><path d="M10.5 9 L9 6.5 A3 3 0 0 1 12 6.5 Z M10.5 9 L8 10.3 A3 3 0 0 1 8.2 7.8 Z M10.5 9 L13 10.3 A3 3 0 0 0 12.8 7.8 Z" fill="#666"/><rect x="3.5" y="5" width="1.5" height="1.5" fill="#eee"/></svg>
<div class="a li" style="left:32px;top:64px;color:#1a1a1a">PAN</div>
<div class="a li" style="left:151px;top:64px;color:#1a1a1a">Panoral</div>
<svg class="a" style="left:0px;top:80px" width="18" height="16"><rect x="2" y="1.5" width="12" height="12" rx="2.5" fill="#f8f820" stroke="#6a4020" stroke-width="1"/><path d="M14 5.5 H16.5 M14 8.5 H16.5" stroke="#e0d040" stroke-width="1.2"/></svg>
<div class="a li" style="left:32px;top:80px;color:#1a1a1a">PARTD</div>
<div class="a li" style="left:151px;top:80px;color:#1a1a1a">Partial Denture</div>
<svg class="a" style="left:0px;top:96px" width="18" height="16"><rect x="2.5" y="0.5" width="13" height="14" fill="#fff" stroke="#222" stroke-width="1.1"/><path d="M2.5 0.5 L7.5 5.5 M15.5 0.5 L10.5 5.5 M2.5 14.5 L7.5 10.0 M15.5 14.5 L10.5 10.0" stroke="#333" stroke-width="0.8"/><rect x="7.5" y="5.5" width="3" height="4.5" fill="#fff" stroke="#222" stroke-width="1"/><circle cx="12.5" cy="9.5" r="1.6" fill="#7a7" stroke="#333" stroke-width="0.7"/></svg>
<div class="a li" style="left:32px;top:96px;color:#1a1a1a">PIN</div>
<div class="a li" style="left:151px;top:96px;color:#1a1a1a">Pin or Screw</div>
<svg class="a" style="left:0px;top:112px" width="18" height="16"><rect x="2.5" y="0.5" width="13" height="14" fill="#fff" stroke="#222" stroke-width="1.1"/><path d="M2.5 0.5 L7.5 5.5 M15.5 0.5 L10.5 5.5 M2.5 14.5 L7.5 10.0 M15.5 14.5 L10.5 10.0" stroke="#333" stroke-width="0.8"/><rect x="7.5" y="5.5" width="3" height="4.5" fill="#fff" stroke="#222" stroke-width="1"/><circle cx="12.5" cy="10" r="1.7" fill="#111"/></svg>
<div class="a li" style="left:32px;top:112px;color:#1a1a1a">PINI</div>
<div class="a li" style="left:151px;top:112px;color:#1a1a1a">Pinned Amalgam Core</div>
<svg class="a" style="left:0px;top:128px" width="18" height="16"><rect x="2.5" y="0.5" width="13" height="14" fill="#fff" stroke="#222" stroke-width="1.1"/><path d="M2.5 0.5 L7.5 5.5 M15.5 0.5 L10.5 5.5 M2.5 14.5 L7.5 10.0 M15.5 14.5 L10.5 10.0" stroke="#333" stroke-width="0.8"/><rect x="7.5" y="5.5" width="3" height="4.5" fill="#fff" stroke="#222" stroke-width="1"/><rect x="11" y="6.5" width="2.5" height="8" fill="#111"/></svg>
<div class="a li" style="left:32px;top:128px;color:#1a1a1a">PNPM</div>
<div class="a li" style="left:151px;top:128px;color:#1a1a1a">Core &amp; Post Metal Alloy</div>
<svg class="a" style="left:0px;top:144px" width="18" height="16"><circle cx="9.5" cy="7" r="7.6" fill="#777" stroke="#333" stroke-width="0.9"/></svg>
<div class="a li" style="left:32px;top:144px;color:#1a1a1a">PONT-PN</div>
<div class="a li" style="left:151px;top:144px;color:#1a1a1a">Porcelain Bonded Non-precious Pontics</div>
<svg class="a" style="left:0px;top:160px" width="18" height="16"><rect x="1.5" y="0" width="16" height="16" rx="1.5" fill="#e4e4e4"/><path d="M4 11.5 L11 3.5 C12.5 2 15 3.5 14 5.5 L7 13 C5.5 14.5 2.5 13.5 4 11.5 Z" fill="#fff" stroke="#555" stroke-width="1.2"/><path d="M4 11.5 L7.5 8 L10 10.5 L7 13 C5.5 14.5 2.5 13.5 4 11.5 Z" fill="#555"/><circle cx="13" cy="11.5" r="2.6" fill="#555"/></svg>
<div class="a li" style="left:32px;top:160px;color:#1a1a1a">PRSCPT</div>
<div class="a li" style="left:151px;top:160px;color:#1a1a1a">Issue of a Prescription</div>
<svg class="a" style="left:0px;top:176px" width="18" height="16"><rect x="1.5" y="0" width="16" height="16" rx="1.5" fill="#e4e4e4"/><rect x="2" y="3.5" width="15" height="10.5" rx="1" fill="#575757"/><rect x="8.5" y="1.5" width="5" height="2.5" fill="#575757"/><circle cx="10.5" cy="9" r="4" fill="#e8e8e8"/><path d="M10.5 9 L9 6.5 A3 3 0 0 1 12 6.5 Z M10.5 9 L8 10.3 A3 3 0 0 1 8.2 7.8 Z M10.5 9 L13 10.3 A3 3 0 0 0 12.8 7.8 Z" fill="#666"/><rect x="3.5" y="5" width="1.5" height="1.5" fill="#eee"/></svg>
<div class="a li" style="left:32px;top:176px;color:#1a1a1a">RADS</div>
<div class="a li" style="left:151px;top:176px;color:#1a1a1a">Xray Small Film</div>
<svg class="a" style="left:0px;top:192px" width="18" height="16"><rect x="2.5" y="0.5" width="13" height="14" fill="#fff" stroke="#e03a20" stroke-width="1.1"/><path d="M2.5 0.5 L7.5 5.5 M15.5 0.5 L11.0 5.5 M2.5 14.5 L7.5 10.0 M15.5 14.5 L11.0 10.0" stroke="#e0a060" stroke-width="0.8"/><rect x="7.5" y="5.5" width="3.5" height="4.5" fill="#fff" stroke="#e03a20" stroke-width="1"/></svg>
<div class="a li" style="left:32px;top:192px;color:#1a1a1a">RCT</div>
<div class="a li" style="left:151px;top:192px;color:#1a1a1a">Root Canal Filling</div>
<svg class="a" style="left:0px;top:208px" width="18" height="16"><rect x="2.5" y="0.5" width="13" height="14" fill="#fff" stroke="#aaa" stroke-width="1.1"/><path d="M2.5 0.5 L7.5 5.5 M15.5 0.5 L11.0 5.5 M2.5 14.5 L7.5 10.0 M15.5 14.5 L11.0 10.0" stroke="#bbb" stroke-width="0.8"/><rect x="7.5" y="5.5" width="3.5" height="4.5" fill="#fff" stroke="#aaa" stroke-width="1"/></svg>
<div class="a li" style="left:32px;top:208px;color:#1a1a1a">RETBNM</div>
<div class="a li" style="left:151px;top:208px;color:#1a1a1a">Non-precious BJC Retainer</div>
<svg class="a" style="left:0px;top:224px" width="18" height="16"><rect x="1.5" y="0" width="16" height="16" rx="1.5" fill="#e4e4e4"/><rect x="3" y="4.5" width="2.5" height="11" fill="#555"/><rect x="2.8" y="0.5" width="3" height="3.5" fill="#666"/><path d="M10 4.5 L11 1 H13 L14 4.5 L14.5 15.5 H9.5 Z" fill="#505050"/></svg>
<div class="a li" style="left:32px;top:224px;color:#1a1a1a">S&amp;P2</div>
<div class="a li" style="left:151px;top:224px;color:#1a1a1a">Scale &amp; Polish Band 2</div>
<svg class="a" style="left:0px;top:240px" width="18" height="16"><rect x="1.5" y="0" width="16" height="16" rx="1.5" fill="#e4e4e4"/><rect x="2.5" y="4" width="2.3" height="11" fill="#555"/><rect x="2.3" y="0.5" width="2" height="3.5" fill="#777"/><path d="M7.5 3.5 C8 1.5 10 1 11.5 2.5 C13 1 15.5 1.5 16 3.5 C16.5 6 15.5 8 15 10.5 L14.5 14.5 H13.2 L12 10 L10.8 14.5 H9.5 L8.8 10.5 C8.3 8 7 6 7.5 3.5 Z" fill="#505050"/></svg>
<div class="a li" style="left:32px;top:240px;color:#1a1a1a">S/P</div>
<div class="a li" style="left:151px;top:240px;color:#1a1a1a">Scale &amp; Polish</div>
<svg class="a" style="left:0px;top:256px" width="18" height="16"><rect x="2.5" y="0.5" width="13" height="14" fill="#fff" stroke="#e03a20" stroke-width="1.1"/><path d="M2.5 0.5 L7.5 5.5 M15.5 0.5 L11.0 5.5 M2.5 14.5 L7.5 10.0 M15.5 14.5 L11.0 10.0" stroke="#e0a060" stroke-width="0.8"/><rect x="7.5" y="5.5" width="3.5" height="4.5" fill="#fff" stroke="#e03a20" stroke-width="1"/></svg>
<div class="a li" style="left:32px;top:256px;color:#1a1a1a">SENS-C</div>
<div class="a li" style="left:151px;top:256px;color:#1a1a1a">Sensitive Cementum</div>
<svg class="a" style="left:0px;top:272px" width="18" height="16"><path d="M7 7.5 L11 4.5 V10.5 Z" fill="#111"/></svg>
<div class="a li" style="left:32px;top:272px;color:#1a1a1a">SERVICE</div>
<div class="a li" style="left:151px;top:272px;color:#1a1a1a">Description</div>
<svg class="a" style="left:0px;top:288px" width="18" height="16"><rect x="2.5" y="0.5" width="13" height="14" fill="#fff" stroke="#222" stroke-width="1.1"/><path d="M2.5 0.5 L7.5 5.5 M15.5 0.5 L11.0 5.5 M2.5 14.5 L7.5 10.0 M15.5 14.5 L11.0 10.0" stroke="#333" stroke-width="0.8"/><rect x="7.5" y="5.5" width="3.5" height="4.5" fill="#fff" stroke="#222" stroke-width="1"/></svg>
<div class="a li" style="left:32px;top:288px;color:#1a1a1a">SMOOTH</div>
<div class="a li" style="left:151px;top:288px;color:#1a1a1a">Stone &amp; Smooth Tooth Surface</div>
</div>
<div class="a" style="left:612px;top:423px;font-size:13.4px;color:#1a1a1a;line-height:15px">Fee</div>
<div class="a" style="left:641px;top:420px;width:108px;height:23px;background:#fdfdfd;border-radius:2px;border:1px solid #e4e4e4"></div>
<div class="a" style="left:645px;top:423px;font-size:13.4px;color:#1a1a1a;line-height:15px">TEST</div>
<svg class="a" style="left:736px;top:429px" width="10" height="6"><path d="M1 1 L5 5 L9 1" fill="none" stroke="#777" stroke-width="1"/></svg>
<div class="a rb" style="left:609px"><svg width="20" height="20"><path d="M6 9.5 H8 V6.5 H12 V9.5 H14 L10 13.5 Z" fill="#111"/></svg></div>
<div class="a rb" style="left:645px"><svg width="20" height="20"><path d="M7.24 8.61 A4.2 4.2 0 1 1 10.57 13.84" fill="none" stroke="#111" stroke-width="1.3"/><path d="M4.8 9.6 L10 7 L9.5 12.4 Z" fill="#111"/></svg></div>
<div class="a rb" style="left:668px"><svg width="20" height="20"><path d="M14.56 8.61 A4.2 4.2 0 1 0 11.23 13.84" fill="none" stroke="#111" stroke-width="1.3"/><path d="M17 9.6 L11.8 7 L12.3 12.4 Z" fill="#111"/></svg></div>
<div class="a" style="left:604px;top:472px;width:426px;height:2px;background:#dadada"></div>
<div class="a" style="left:604px;top:471px;width:426px;height:1px;background:#fafafa"></div>
<div class="a" style="left:608px;top:494px;width:422px;height:1px;background:#7a7a7a"></div>
<div class="a" style="left:607px;top:476px;width:100px;height:19px;background:#f0f0f0;border-top:1px solid #fff;border-left:1px solid #fff;border-right:1px solid #777"></div>
<div class="a" style="left:617px;top:478px;font-size:13.4px;font-weight:bold;color:#111;line-height:14px;letter-spacing:0.35px">Quick Plans</div>
<div class="a" style="left:707px;top:478px;width:82px;height:17px;background:#f0f0f0;border-top:1px solid #fff;border-right:1px solid #777;border-bottom:1px solid #777"></div>
<div class="a" style="left:707px;top:479px;width:82px;text-align:center;font-size:13.4px;color:#1a1a1a;line-height:14px">Education</div>
<div class="a" style="left:789px;top:478px;width:56px;height:17px;background:#f0f0f0;border-top:1px solid #fff;border-right:1px solid #777;border-bottom:1px solid #777"></div>
<div class="a" style="left:789px;top:479px;width:56px;text-align:center;font-size:13.4px;color:#1a1a1a;line-height:14px">Base</div>
<div class="a" style="left:845px;top:478px;width:94px;height:17px;background:#f0f0f0;border-top:1px solid #fff;border-right:1px solid #777;border-bottom:1px solid #777"></div>
<div class="a" style="left:845px;top:479px;width:94px;text-align:center;font-size:13.4px;color:#1a1a1a;line-height:14px">Oral Health</div>
<div class="a" style="left:939px;top:478px;width:85px;height:17px;background:#f0f0f0;border-top:1px solid #fff;border-right:1px solid #777;border-bottom:1px solid #777"></div>
<div class="a" style="left:939px;top:479px;width:85px;text-align:center;font-size:13.4px;color:#1a1a1a;line-height:14px">Estimates</div>
<div class="a" style="left:1024px;top:478px;width:6px;height:17px;background:#f0f0f0;border-top:1px solid #fff;border-left:1px solid #fff;border-bottom:1px solid #777"></div>
<div class="a" style="left:607px;top:503px;width:430px;height:137px;background:#fff;border:1px solid #a8a8a8"></div>
<div class="a" style="left:608px;top:504px;width:422px;height:135px;overflow:hidden">
<div class="a" style="left:0;top:0px;width:422px;height:16px;background:#0078d7"></div>
<div class="a" style="left:2px;top:0px;width:15px;height:16px;background:#fff"></div>
<svg class="a" style="left:0px;top:0px" width="18" height="16"><rect x="3.7" y="1.5" width="12.3" height="13.2" rx="1" fill="#f2f2f2" stroke="#4a4a4a" stroke-width="1.3"/><rect x="6.5" y="0" width="6" height="3" rx="0.5" fill="#555"/><path d="M5.8 5.5 H13.5 M5.8 8 H13.5 M5.8 10.5 H9.5 M5.8 13 H9.5" stroke="#777" stroke-width="1"/><rect x="9.5" y="8" width="7.5" height="6.3" fill="#6a9ae8"/><path d="M9.5 9.3 H14.5 M9.5 11.3 H12" stroke="#1a40d0" stroke-width="1.1"/></svg>
<div class="a li" style="left:28px;top:0px;color:#fff">CO Dentures</div>
<div class="a li" style="left:172px;top:0px;color:#fff">COT</div>
<div class="a li" style="left:280px;top:0px;color:#fff">5 Appts</div>
<div class="a li" style="left:340px;top:0px;color:#fff">D1, D2, D3, D4</div>
<svg class="a" style="left:0px;top:16px" width="18" height="16"><rect x="3.7" y="1.5" width="12.3" height="13.2" rx="1" fill="#f2f2f2" stroke="#4a4a4a" stroke-width="1.3"/><rect x="6.5" y="0" width="6" height="3" rx="0.5" fill="#555"/><path d="M5.8 5.5 H13.5 M5.8 8 H13.5 M5.8 10.5 H9.5 M5.8 13 H9.5" stroke="#777" stroke-width="1"/><rect x="9.5" y="8" width="7.5" height="6.3" fill="#6a9ae8"/><path d="M9.5 9.3 H14.5 M9.5 11.3 H12" stroke="#1a40d0" stroke-width="1.1"/></svg>
<div class="a li" style="left:28px;top:16px;color:#1a1a1a">CO New Patient Exam</div>
<div class="a li" style="left:172px;top:16px;color:#1a1a1a">COT</div>
<div class="a li" style="left:280px;top:16px;color:#1a1a1a">3 Appts</div>
<div class="a li" style="left:340px;top:16px;color:#1a1a1a">EXNP, EXRAY</div>
<svg class="a" style="left:0px;top:32px" width="18" height="16"><rect x="3.7" y="1.5" width="12.3" height="13.2" rx="1" fill="#f2f2f2" stroke="#4a4a4a" stroke-width="1.3"/><rect x="6.5" y="0" width="6" height="3" rx="0.5" fill="#555"/><path d="M5.8 5.5 H13.5 M5.8 8 H13.5 M5.8 10.5 H9.5 M5.8 13 H9.5" stroke="#777" stroke-width="1"/><rect x="9.5" y="8" width="7.5" height="6.3" fill="#6a9ae8"/><path d="M9.5 9.3 H14.5 M9.5 11.3 H12" stroke="#1a40d0" stroke-width="1.1"/></svg>
<div class="a li" style="left:28px;top:32px;color:#1a1a1a">Dentures</div>
<div class="a li" style="left:172px;top:32px;color:#1a1a1a">COT</div>
<div class="a li" style="left:280px;top:32px;color:#1a1a1a">5 Appts</div>
<div class="a li" style="left:340px;top:32px;color:#1a1a1a">D1, D2, D3, D4</div>
<svg class="a" style="left:0px;top:48px" width="18" height="16"><rect x="3.7" y="1.5" width="12.3" height="13.2" rx="1" fill="#f2f2f2" stroke="#4a4a4a" stroke-width="1.3"/><rect x="6.5" y="0" width="6" height="3" rx="0.5" fill="#555"/><path d="M5.8 5.5 H13.5 M5.8 8 H13.5 M5.8 10.5 H9.5 M5.8 13 H9.5" stroke="#777" stroke-width="1"/><rect x="9.5" y="8" width="7.5" height="6.3" fill="#6a9ae8"/><path d="M9.5 9.3 H14.5 M9.5 11.3 H12" stroke="#1a40d0" stroke-width="1.1"/></svg>
<div class="a li" style="left:28px;top:48px;color:#1a1a1a">Exam &amp; S/P</div>
<div class="a li" style="left:172px;top:48px;color:#1a1a1a"></div>
<div class="a li" style="left:280px;top:48px;color:#1a1a1a">2 Appts</div>
<div class="a li" style="left:340px;top:48px;color:#1a1a1a">EX30, S/P</div>
<svg class="a" style="left:0px;top:64px" width="18" height="16"><rect x="3.7" y="1.5" width="12.3" height="13.2" rx="1" fill="#f2f2f2" stroke="#4a4a4a" stroke-width="1.3"/><rect x="6.5" y="0" width="6" height="3" rx="0.5" fill="#555"/><path d="M5.8 5.5 H13.5 M5.8 8 H13.5 M5.8 10.5 H9.5 M5.8 13 H9.5" stroke="#777" stroke-width="1"/><rect x="9.5" y="8" width="7.5" height="6.3" fill="#6a9ae8"/><path d="M9.5 9.3 H14.5 M9.5 11.3 H12" stroke="#1a40d0" stroke-width="1.1"/></svg>
<div class="a li" style="left:28px;top:64px;color:#1a1a1a">JH NP Exam</div>
<div class="a li" style="left:172px;top:64px;color:#1a1a1a">COT</div>
<div class="a li" style="left:280px;top:64px;color:#1a1a1a">2 Appts</div>
<div class="a li" style="left:340px;top:64px;color:#1a1a1a">EXNP, EXRAY</div>
<svg class="a" style="left:0px;top:80px" width="18" height="16"><rect x="3.7" y="1.5" width="12.3" height="13.2" rx="1" fill="#f2f2f2" stroke="#4a4a4a" stroke-width="1.3"/><rect x="6.5" y="0" width="6" height="3" rx="0.5" fill="#555"/><path d="M5.8 5.5 H13.5 M5.8 8 H13.5 M5.8 10.5 H9.5 M5.8 13 H9.5" stroke="#777" stroke-width="1"/><rect x="9.5" y="8" width="7.5" height="6.3" fill="#6a9ae8"/><path d="M9.5 9.3 H14.5 M9.5 11.3 H12" stroke="#1a40d0" stroke-width="1.1"/></svg>
<div class="a li" style="left:28px;top:80px;color:#1a1a1a">LP New Patient Exam</div>
<div class="a li" style="left:172px;top:80px;color:#1a1a1a">COT</div>
<div class="a li" style="left:280px;top:80px;color:#1a1a1a">3 Appts</div>
<div class="a li" style="left:340px;top:80px;color:#1a1a1a">EXNP, EXRAY</div>
<svg class="a" style="left:0px;top:96px" width="18" height="16"><rect x="3.7" y="1.5" width="12.3" height="13.2" rx="1" fill="#f2f2f2" stroke="#4a4a4a" stroke-width="1.3"/><rect x="6.5" y="0" width="6" height="3" rx="0.5" fill="#555"/><path d="M5.8 5.5 H13.5 M5.8 8 H13.5 M5.8 10.5 H9.5 M5.8 13 H9.5" stroke="#777" stroke-width="1"/><rect x="9.5" y="8" width="7.5" height="6.3" fill="#6a9ae8"/><path d="M9.5 9.3 H14.5 M9.5 11.3 H12" stroke="#1a40d0" stroke-width="1.1"/></svg>
<div class="a li" style="left:28px;top:96px;color:#1a1a1a">New Patient - Private</div>
<div class="a li" style="left:172px;top:96px;color:#1a1a1a">COT</div>
<div class="a li" style="left:280px;top:96px;color:#1a1a1a">3 Appts</div>
<div class="a li" style="left:340px;top:96px;color:#1a1a1a">EXNP, EXRAY</div>
</div>
<div class="a" style="left:608px;top:646px;font-size:13.4px;color:#1a1a1a;line-height:15px">Filter by Provider</div>
<div class="a" style="left:720px;top:643px;width:88px;height:19px;background:#fff"></div>
<div class="a" style="left:872px;top:646px;font-size:13.4px;color:#1a1a1a;line-height:15px">Filter by Type</div>
<div class="a" style="left:965px;top:643px;width:65px;height:19px;background:#fff"></div></body></html>
